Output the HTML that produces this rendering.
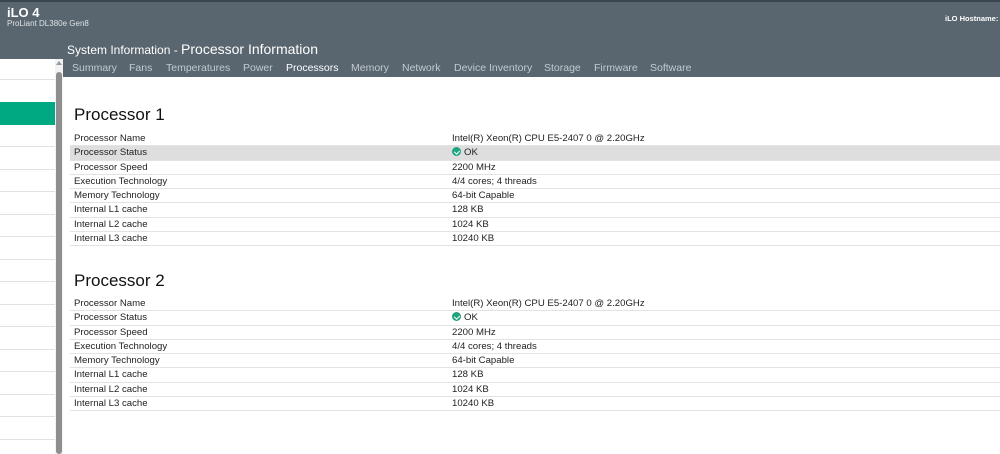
<!DOCTYPE html>
<html><head><style>
*{margin:0;padding:0;box-sizing:border-box}
body{width:1000px;height:454px;overflow:hidden;background:#fff;font-family:"Liberation Sans",Arial,sans-serif;position:relative;color:#222}
.hdr{position:absolute;left:0;top:0;width:1000px;height:77px;background:#59666f;border-top:2px solid #3a454e}
.abs{position:absolute;white-space:nowrap}
.side{position:absolute;left:0;top:59px;width:55px;height:395px;background:#fff}
.side div{position:absolute;left:0;width:55px;border-bottom:1px solid #e2e2e2}
.sb{position:absolute;left:55px;top:59px;width:8px;height:395px;background:#f2f2f2}
.thumb{position:absolute;left:56px;top:72px;width:6px;height:382px;background:#8e8e8e;border-radius:3px}
.tabs span{position:absolute;top:62px;font-size:10.5px;color:#c3cad0}
h2{position:absolute;left:74px;font-weight:normal;font-size:17px;color:#111}
.tbl{position:absolute;left:70px;width:930px}
.r{height:14.3px;border-bottom:1px solid #e3e3e3;font-size:9.6px;line-height:13.3px;position:relative}
.r span{position:absolute;left:4px}
.r b{position:absolute;left:382px;font-weight:normal}
.hl{background:#dedede}
.ok{display:inline-block;width:9px;height:9px;border-radius:50%;background:#1fa480;vertical-align:-1px;margin-right:3px;position:relative}
.ok:after{content:"";position:absolute;left:2.5px;top:1.5px;width:2.5px;height:4px;border:solid #fff;border-width:0 1.3px 1.3px 0;transform:rotate(45deg)}
</style></head><body>
<div class="hdr"></div>
<div class="abs" style="left:7px;top:5px;font-size:13px;font-weight:bold;color:#fff">iLO 4</div>
<div class="abs" style="left:7px;top:19px;font-size:8px;color:#dfe3e6">ProLiant DL380e Gen8</div>
<div class="abs" style="left:945px;top:14px;font-size:7.5px;color:#fff;font-weight:bold">iLO Hostname:</div>
<div class="abs" style="left:67px;top:41px;color:#fff;font-size:12px">System Information - <span style="font-size:14px">Processor Information</span></div>
<div class="tabs">
<span style="left:72px">Summary</span><span style="left:129px">Fans</span><span style="left:166px">Temperatures</span><span style="left:243px">Power</span><span style="left:286px;color:#fff">Processors</span><span style="left:351px">Memory</span><span style="left:402px">Network</span><span style="left:454px">Device Inventory</span><span style="left:544px">Storage</span><span style="left:594px">Firmware</span><span style="left:650px">Software</span>
</div>
<div class="side">
<div style="top:0;height:21px"></div>
<div style="top:43px;height:23px;background:#01a982;border:none"></div>
<div style="top:66px;height:22px"></div><div style="top:88px;height:23px"></div><div style="top:111px;height:22px"></div><div style="top:133px;height:23px"></div><div style="top:156px;height:22px"></div><div style="top:178px;height:23px"></div><div style="top:201px;height:22px"></div><div style="top:223px;height:23px"></div><div style="top:246px;height:22px"></div><div style="top:268px;height:23px"></div><div style="top:291px;height:22px"></div><div style="top:313px;height:23px"></div><div style="top:336px;height:22px"></div><div style="top:358px;height:23px"></div>
</div>
<div class="sb"></div><div class="thumb"></div>
<div class="abs" style="left:56px;top:61px;width:0;height:0;border-left:3px solid transparent;border-right:3px solid transparent;border-bottom:4px solid #999"></div>
<h2 style="top:105px">Processor 1</h2>
<div class="tbl" style="top:132px">
<div class="r"><span>Processor Name</span><b>Intel(R) Xeon(R) CPU E5-2407 0 @ 2.20GHz</b></div>
<div class="r hl"><span>Processor Status</span><b><i class="ok"></i>OK</b></div>
<div class="r"><span>Processor Speed</span><b>2200 MHz</b></div>
<div class="r"><span>Execution Technology</span><b>4/4 cores; 4 threads</b></div>
<div class="r"><span>Memory Technology</span><b>64-bit Capable</b></div>
<div class="r"><span>Internal L1 cache</span><b>128 KB</b></div>
<div class="r"><span>Internal L2 cache</span><b>1024 KB</b></div>
<div class="r"><span>Internal L3 cache</span><b>10240 KB</b></div>
</div>
<h2 style="top:271px">Processor 2</h2>
<div class="tbl" style="top:297px">
<div class="r"><span>Processor Name</span><b>Intel(R) Xeon(R) CPU E5-2407 0 @ 2.20GHz</b></div>
<div class="r"><span>Processor Status</span><b><i class="ok"></i>OK</b></div>
<div class="r"><span>Processor Speed</span><b>2200 MHz</b></div>
<div class="r"><span>Execution Technology</span><b>4/4 cores; 4 threads</b></div>
<div class="r"><span>Memory Technology</span><b>64-bit Capable</b></div>
<div class="r"><span>Internal L1 cache</span><b>128 KB</b></div>
<div class="r"><span>Internal L2 cache</span><b>1024 KB</b></div>
<div class="r"><span>Internal L3 cache</span><b>10240 KB</b></div>
</div>
</body></html>
